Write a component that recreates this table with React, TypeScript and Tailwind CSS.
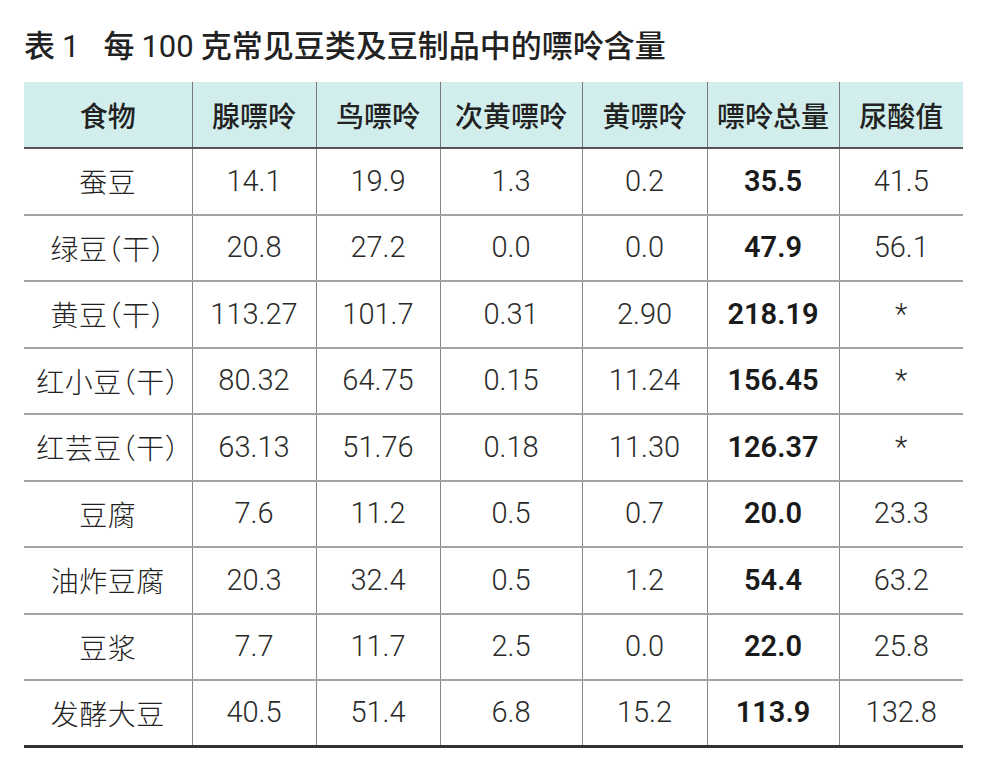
const headers = ["食物", "腺嘌呤", "鸟嘌呤", "次黄嘌呤", "黄嘌呤", "嘌呤总量", "尿酸值"];
const widths = ["w-[168px]", "w-[124px]", "w-[124px]", "w-[142px]", "w-[125px]", "w-[132px]", "w-[124px]"];

const rows = [
  ["蚕豆", "14.1", "19.9", "1.3", "0.2", "35.5", "41.5"],
  ["绿豆（干）", "20.8", "27.2", "0.0", "0.0", "47.9", "56.1"],
  ["黄豆（干）", "113.27", "101.7", "0.31", "2.90", "218.19", "*"],
  ["红小豆（干）", "80.32", "64.75", "0.15", "11.24", "156.45", "*"],
  ["红芸豆（干）", "63.13", "51.76", "0.18", "11.30", "126.37", "*"],
  ["豆腐", "7.6", "11.2", "0.5", "0.7", "20.0", "23.3"],
  ["油炸豆腐", "20.3", "32.4", "0.5", "1.2", "54.4", "63.2"],
  ["豆浆", "7.7", "11.7", "2.5", "0.0", "22.0", "25.8"],
  ["发酵大豆", "40.5", "51.4", "6.8", "15.2", "113.9", "132.8"],
];

const cjk = "font-['Noto_Sans_CJK_SC',sans-serif]";
const num = "font-['Roboto','Liberation_Sans','Noto_Sans_CJK_SC',sans-serif]";

export default function App() {
  return (
    <div className={`w-[1000px] h-[773px] bg-white ${cjk} text-[#222]`}>
      <div className={`flex items-baseline pl-[24px] pt-[24px] h-[82px] text-[31px] leading-[40px] text-[#222] ${cjk} font-medium whitespace-pre`}>
        <span>表 </span>
        <span className={`${num} font-normal`}>1</span>
        <span className="ml-[24px]">每 </span>
        <span className={`${num} font-normal`}>100</span>
        <span> 克常见豆类及豆制品中的嘌呤含量</span>
      </div>
      <table className="ml-[24px] border-collapse table-fixed w-[939px]">
        <thead>
          <tr className="bg-[#d2eeec] h-[66px]">
            {headers.map((h, i) => (
              <th
                key={h}
                className={`${widths[i]} p-0 text-[28px] font-medium text-[#222] border-b-2 border-b-[#555] ${
                  i > 0 ? "border-l border-l-[#777]" : ""
                }`}
              >
                {h}
              </th>
            ))}
          </tr>
        </thead>
        <tbody>
          {rows.map((r, ri) => (
            <tr
              key={r[0]}
              className={`h-[66.5px] ${
                ri === rows.length - 1 ? "border-b-[3px] border-b-[#333]" : "border-b-2 border-b-[#a3a3a3]"
              }`}
            >
              {r.map((c, ci) => (
                <td
                  key={ci}
                  className={`p-0 text-center ${
                    ci === 0
                      ? `${cjk} text-[28px] font-light text-[#222] tracking-[0.5px] [font-feature-settings:'halt']`
                      : `${num} text-[29px]`
                  } ${ci === 5 ? "font-semibold text-[#1a1a1a]" : ci > 0 ? "font-light text-[#2a2a2a]" : ""} ${
                    ci > 0 ? "border-l border-l-[#888]" : ""
                  }`}
                >
                  {c}
                </td>
              ))}
            </tr>
          ))}
        </tbody>
      </table>
    </div>
  );
}
